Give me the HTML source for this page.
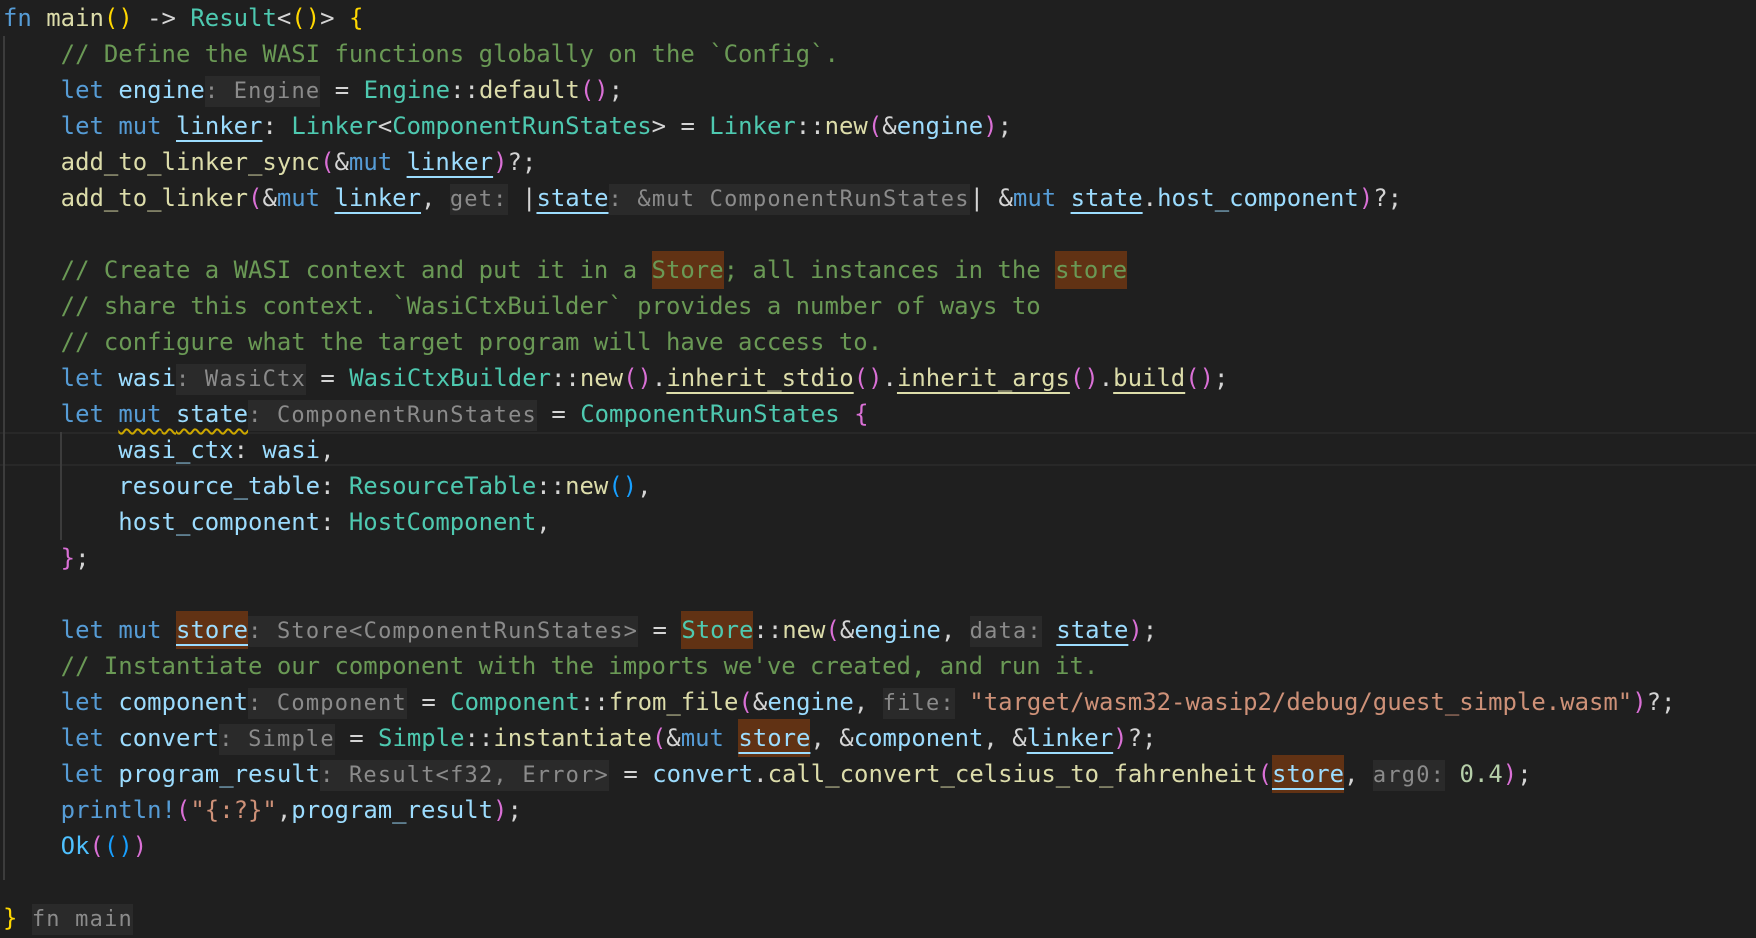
<!DOCTYPE html>
<html><head><meta charset="utf-8"><style>
html,body{margin:0;padding:0;background:#1f1f1f;width:1756px;height:936px;overflow:hidden}
#ed{position:absolute;left:3px;top:0;font-family:"DejaVu Sans Mono","Liberation Mono",monospace;font-size:23.95px;color:#d4d4d4}
.l{height:36px;line-height:36px;white-space:pre}
.k{color:#569cd6}.v{color:#9cdcfe}.t{color:#4ec9b0}.f{color:#dcdcaa}.c{color:#6a9955}.s{color:#ce9178}.n{color:#b5cea8}
.y{color:#ffd700}.m{color:#da70d6}.b{color:#179fff}
.h{font-size:22px;letter-spacing:1.2px;color:#8b8b8b;background:#2a2a2a;padding:3px 0}
.u{text-decoration:underline;text-decoration-color:#9cdcfe;text-decoration-thickness:2px;text-underline-offset:6px}
.uf{text-decoration:underline;text-decoration-color:#dcdcaa;text-decoration-thickness:2px;text-underline-offset:6px}
.w{text-decoration:underline wavy #cca700;text-decoration-thickness:1.5px;text-underline-offset:6px}
.hl{background:#613214;padding:5px 0}
.g{position:absolute;width:2px;background:#3c3c3c}
#cur{position:absolute;left:0;top:432px;width:1756px;height:34px;border-top:2px solid #282828;border-bottom:2px solid #282828;box-sizing:border-box}
</style></head><body>
<div id="cur"></div>
<div class="g" style="left:3px;top:36px;height:844px"></div>
<div class="g" style="left:60px;top:432px;height:108px"></div>
<div id="ed">
<div class="l"><span class="k">fn</span> <span class="f">main</span><span class="y">()</span> -&gt; <span class="t">Result</span>&lt;<span class="y">()</span>&gt; <span class="y">{</span></div>
<div class="l">    <span class="c">// Define the WASI functions globally on the `Config`.</span></div>
<div class="l">    <span class="k">let</span> <span class="v">engine</span><span class="h">: Engine</span> = <span class="t">Engine</span>::<span class="f">default</span><span class="m">()</span>;</div>
<div class="l">    <span class="k">let</span> <span class="k">mut</span> <span class="v u">linker</span>: <span class="t">Linker</span>&lt;<span class="t">ComponentRunStates</span>&gt; = <span class="t">Linker</span>::<span class="f">new</span><span class="m">(</span>&amp;<span class="v">engine</span><span class="m">)</span>;</div>
<div class="l">    <span class="f">add_to_linker_sync</span><span class="m">(</span>&amp;<span class="k">mut</span> <span class="v u">linker</span><span class="m">)</span>?;</div>
<div class="l">    <span class="f">add_to_linker</span><span class="m">(</span>&amp;<span class="k">mut</span> <span class="v u">linker</span>, <span class="h">get:</span> |<span class="v u">state</span><span class="h">: &amp;mut ComponentRunStates</span>| &amp;<span class="k">mut</span> <span class="v u">state</span>.<span class="v">host_component</span><span class="m">)</span>?;</div>
<div class="l"> </div>
<div class="l">    <span class="c">// Create a WASI context and put it in a <span class="hl">Store</span>; all instances in the <span class="hl">store</span></span></div>
<div class="l">    <span class="c">// share this context. `WasiCtxBuilder` provides a number of ways to</span></div>
<div class="l">    <span class="c">// configure what the target program will have access to.</span></div>
<div class="l">    <span class="k">let</span> <span class="v">wasi</span><span class="h">: WasiCtx</span> = <span class="t">WasiCtxBuilder</span>::<span class="f">new</span><span class="m">()</span>.<span class="f uf">inherit_stdio</span><span class="m">()</span>.<span class="f uf">inherit_args</span><span class="m">()</span>.<span class="f uf">build</span><span class="m">()</span>;</div>
<div class="l">    <span class="k">let</span> <span class="k w">mut</span><span class="w"> </span><span class="v w">state</span><span class="h">: ComponentRunStates</span> = <span class="t">ComponentRunStates</span> <span class="m">{</span></div>
<div class="l">        <span class="v">wasi_ctx</span>: <span class="v">wasi</span>,</div>
<div class="l">        <span class="v">resource_table</span>: <span class="t">ResourceTable</span>::<span class="f">new</span><span class="b">()</span>,</div>
<div class="l">        <span class="v">host_component</span>: <span class="t">HostComponent</span>,</div>
<div class="l">    <span class="m">}</span>;</div>
<div class="l"> </div>
<div class="l">    <span class="k">let</span> <span class="k">mut</span> <span class="v u hl">store</span><span class="h">: Store&lt;ComponentRunStates&gt;</span> = <span class="t hl">Store</span>::<span class="f">new</span><span class="m">(</span>&amp;<span class="v">engine</span>, <span class="h">data:</span> <span class="v u">state</span><span class="m">)</span>;</div>
<div class="l">    <span class="c">// Instantiate our component with the imports we've created, and run it.</span></div>
<div class="l">    <span class="k">let</span> <span class="v">component</span><span class="h">: Component</span> = <span class="t">Component</span>::<span class="f">from_file</span><span class="m">(</span>&amp;<span class="v">engine</span>, <span class="h">file:</span> <span class="s">"target/wasm32-wasip2/debug/guest_simple.wasm"</span><span class="m">)</span>?;</div>
<div class="l">    <span class="k">let</span> <span class="v">convert</span><span class="h">: Simple</span> = <span class="t">Simple</span>::<span class="f">instantiate</span><span class="m">(</span>&amp;<span class="k">mut</span> <span class="v u hl">store</span>, &amp;<span class="v">component</span>, &amp;<span class="v u">linker</span><span class="m">)</span>?;</div>
<div class="l">    <span class="k">let</span> <span class="v">program_result</span><span class="h">: Result&lt;f32, Error&gt;</span> = <span class="v">convert</span>.<span class="f">call_convert_celsius_to_fahrenheit</span><span class="m">(</span><span class="v u hl">store</span>, <span class="h">arg0:</span> <span class="n">0.4</span><span class="m">)</span>;</div>
<div class="l">    <span class="k">println!</span><span class="m">(</span><span class="s">"{:?}"</span>,<span class="v">program_result</span><span class="m">)</span>;</div>
<div class="l">    <span class="t" style="color:#4fc1ff">Ok</span><span class="m">(</span><span class="b">()</span><span class="m">)</span></div>
<div class="l"> </div>
<div class="l"><span class="y">}</span> <span class="h">fn main</span></div>
</div>
</body></html>
